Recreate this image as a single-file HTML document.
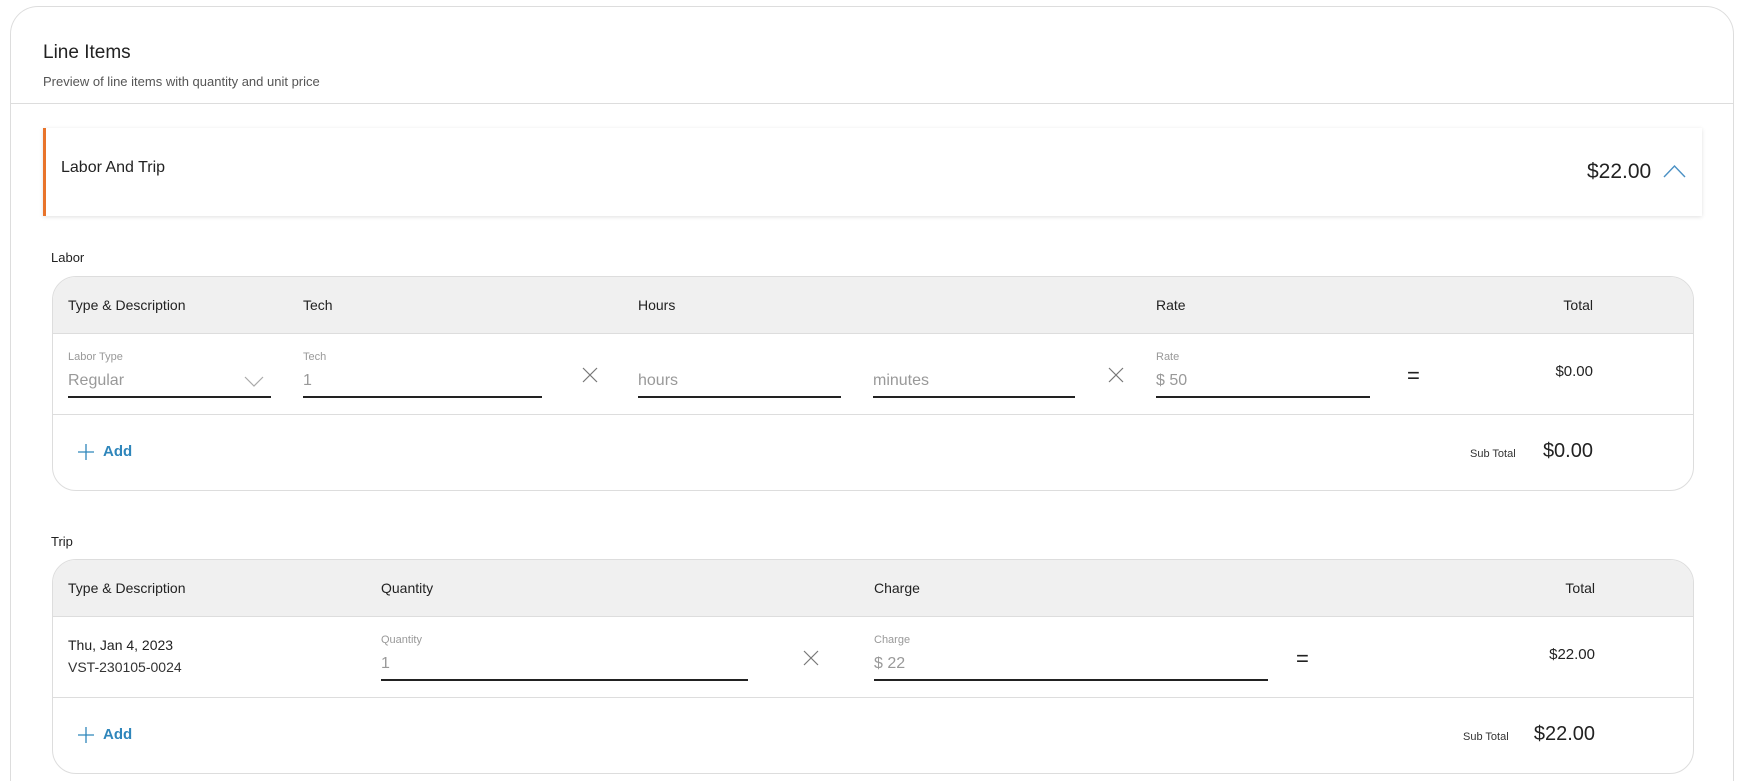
<!DOCTYPE html>
<html><head><meta charset="utf-8"><style>
*{margin:0;padding:0;box-sizing:border-box}
html,body{width:1750px;height:781px;overflow:hidden;background:#fff}
body{font-family:"Liberation Sans",sans-serif;color:#222}
#w{position:relative;width:1750px;height:781px;overflow:hidden}
.a{position:absolute;white-space:nowrap}
.outer{position:absolute;left:10px;top:6px;width:1724px;height:775px;border:1px solid #ddd;border-bottom:none;border-radius:28px 28px 0 0}
.card{position:absolute;left:43px;top:128px;width:1659px;height:88px;background:#fff;border-left:3px solid #e8732a;box-shadow:0 1px 4px rgba(0,0,0,.12)}
.tbl{position:absolute;left:52px;width:1642px;border:1px solid #ddd;border-radius:24px;overflow:hidden}
.hd{position:absolute;left:0;top:0;width:100%;height:57px;background:#f0f0f0;border-bottom:1px solid #ddd}
.row{position:absolute;left:0;width:100%;border-bottom:1px solid #ddd}
.h{font-size:14px;color:#222}
.lbl{font-size:11px;color:#999}
.ph{font-size:16px;color:#999}
.ul{position:absolute;height:1.5px;background:#222}
.x{position:absolute;width:16px;height:16px}
.add{color:#2f86bb;font-size:15px;font-weight:bold}
</style></head><body><div id="w">
<div class="outer"></div>
<div class="a" style="left:43px;top:42px;font-size:19px">Line Items</div>
<div class="a" style="left:43px;top:74px;font-size:13px;color:#555">Preview of line items with quantity and unit price</div>
<div class="a" style="left:11px;top:103px;width:1722px;height:1px;background:#ddd"></div>

<div class="card"></div>
<div class="a" style="left:61px;top:159px;font-size:16px">Labor And Trip</div>
<div class="a" style="left:1587px;top:160px;font-size:21px">$22.00</div>
<svg class="a" style="left:1663px;top:164px" width="23" height="14" viewBox="0 0 23 14"><path d="M1 13L11.5 2L22 13" fill="none" stroke="#4a90c4" stroke-width="1.4"/></svg>

<div class="a" style="left:51px;top:250px;font-size:13px">Labor</div>
<div class="tbl" style="top:276px;height:215px">
 <div class="hd"></div>
 <div class="row" style="top:57px;height:81px"></div>
</div>
<div class="a h" style="left:68px;top:297px">Type &amp; Description</div>
<div class="a h" style="left:303px;top:297px">Tech</div>
<div class="a h" style="left:638px;top:297px">Hours</div>
<div class="a h" style="left:1156px;top:297px">Rate</div>
<div class="a h" style="left:1540px;top:297px;width:53px;text-align:right">Total</div>
<div class="a lbl" style="left:68px;top:351px">Labor Type</div>
<div class="a ph" style="left:68px;top:372px">Regular</div>
<svg class="a" style="left:244px;top:376px" width="20" height="12" viewBox="0 0 20 12"><path d="M1 1L10 10L19 1" fill="none" stroke="#aaa" stroke-width="1.2"/></svg>
<div class="ul" style="left:68px;top:396px;width:203px"></div>
<div class="a lbl" style="left:303px;top:351px">Tech</div>
<div class="a ph" style="left:303px;top:372px">1</div>
<div class="ul" style="left:303px;top:396px;width:239px"></div>
<svg class="x" style="left:582px;top:367px" viewBox="0 0 16 16"><path d="M1 1L15 15M15 1L1 15" stroke="#777" stroke-width="1.2"/></svg>
<div class="a ph" style="left:638px;top:372px">hours</div>
<div class="ul" style="left:638px;top:396px;width:203px"></div>
<div class="a ph" style="left:873px;top:372px">minutes</div>
<div class="ul" style="left:873px;top:396px;width:202px"></div>
<svg class="x" style="left:1108px;top:367px" viewBox="0 0 16 16"><path d="M1 1L15 15M15 1L1 15" stroke="#777" stroke-width="1.2"/></svg>
<div class="a lbl" style="left:1156px;top:351px">Rate</div>
<div class="a ph" style="left:1156px;top:372px">$ 50</div>
<div class="ul" style="left:1156px;top:396px;width:214px"></div>
<div class="a" style="left:1407px;top:363px;font-size:22px">=</div>
<div class="a" style="left:1500px;top:363px;width:93px;text-align:right;font-size:15px">$0.00</div>
<svg class="a" style="left:78px;top:444px" width="16" height="16" viewBox="0 0 16 16"><path d="M8 0V16M0 8H16" stroke="#2f86bb" stroke-width="1.3"/></svg>
<div class="a add" style="left:103px;top:443px">Add</div>
<div class="a" style="left:1470px;top:448px;font-size:11px;color:#333">Sub Total</div>
<div class="a" style="left:1530px;top:440px;width:63px;text-align:right;font-size:20px">$0.00</div>

<div class="a" style="left:51px;top:534px;font-size:13px">Trip</div>
<div class="tbl" style="top:559px;height:215px">
 <div class="hd"></div>
 <div class="row" style="top:57px;height:81px"></div>
</div>
<div class="a h" style="left:68px;top:580px">Type &amp; Description</div>
<div class="a h" style="left:381px;top:580px">Quantity</div>
<div class="a h" style="left:874px;top:580px">Charge</div>
<div class="a h" style="left:1540px;top:580px;width:55px;text-align:right">Total</div>
<div class="a" style="left:68px;top:637px;font-size:14px">Thu, Jan 4, 2023</div>
<div class="a" style="left:68px;top:659px;font-size:14px;color:#333">VST-230105-0024</div>
<div class="a lbl" style="left:381px;top:634px">Quantity</div>
<div class="a ph" style="left:381px;top:655px">1</div>
<div class="ul" style="left:381px;top:679px;width:367px"></div>
<svg class="x" style="left:803px;top:650px" viewBox="0 0 16 16"><path d="M1 1L15 15M15 1L1 15" stroke="#777" stroke-width="1.2"/></svg>
<div class="a lbl" style="left:874px;top:634px">Charge</div>
<div class="a ph" style="left:874px;top:655px">$ 22</div>
<div class="ul" style="left:874px;top:679px;width:394px"></div>
<div class="a" style="left:1296px;top:646px;font-size:22px">=</div>
<div class="a" style="left:1500px;top:646px;width:95px;text-align:right;font-size:15px">$22.00</div>
<svg class="a" style="left:78px;top:727px" width="16" height="16" viewBox="0 0 16 16"><path d="M8 0V16M0 8H16" stroke="#2f86bb" stroke-width="1.3"/></svg>
<div class="a add" style="left:103px;top:726px">Add</div>
<div class="a" style="left:1463px;top:731px;font-size:11px;color:#333">Sub Total</div>
<div class="a" style="left:1520px;top:723px;width:75px;text-align:right;font-size:20px">$22.00</div>
</div></body></html>
